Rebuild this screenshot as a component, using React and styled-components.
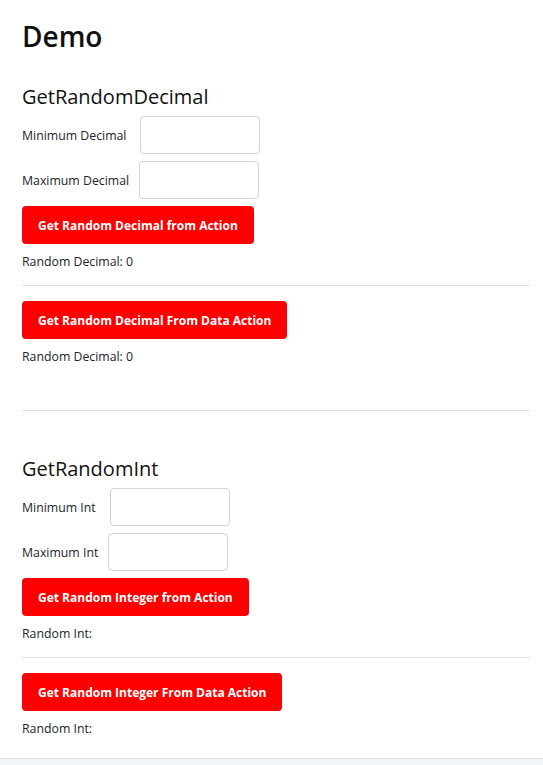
import React, { useState } from "react";
import styled, { createGlobalStyle } from "styled-components";

const GlobalStyle = createGlobalStyle`
  html, body {
    margin: 0;
    padding: 0;
    background: #f1f5f9;
  }
  body {
    font-family: "Open Sans", "Noto Sans", sans-serif;
    color: #212529;
  }
`;

const Card = styled.div`
  background: #ffffff;
  border-bottom: 1px solid #dde2e8;
  padding: 18px 13px 20px 22px;
`;

const Title = styled.h1`
  margin: 0 0 30px;
  font-size: 28px;
  font-weight: 600;
  line-height: 36px;
  color: #111;
`;

const SectionTitle = styled.h2`
  margin: 0 0 6px;
  font-size: 20px;
  font-weight: 500;
  line-height: 26px;
  color: #111;
`;

const Field = styled.div`
  display: flex;
  align-items: center;
  margin-bottom: 7px;
`;

const Label = styled.label`
  font-size: 12.3px;
  color: #212529;
  margin-right: ${(props) => props.gap}px;
`;

const Input = styled.input`
  width: 120px;
  height: 38px;
  box-sizing: border-box;
  border: 1px solid #ced4da;
  border-radius: 4px;
  padding: 6px 10px;
  font-family: inherit;
  font-size: 13px;
  outline: none;
`;

const Button = styled.button`
  display: block;
  height: 38px;
  box-sizing: border-box;
  border: none;
  border-radius: 4px;
  background: #ff0000;
  color: #ffffff;
  font-family: inherit;
  font-size: 12px;
  font-weight: 700;
  padding: 0 16px;
  cursor: pointer;
`;

const Result = styled.p`
  margin: 9px 0 0;
  font-size: 12.3px;
  line-height: 18px;
  color: #212529;
`;

const Divider = styled.hr`
  border: none;
  border-top: 1px solid #dee2e6;
  margin: ${(props) => props.space || "14px 0 15px"};
`;

function RandomSection({ title, kind, valueLabel, value, fromAction, fromData, gaps }) {
  return (
    <section>
      <SectionTitle>{title}</SectionTitle>
      <Field>
        <Label gap={gaps[0]}>Minimum {kind}</Label>
        <Input type="text" />
      </Field>
      <Field>
        <Label gap={gaps[1]}>Maximum {kind}</Label>
        <Input type="text" />
      </Field>
      <Button>{fromAction}</Button>
      <Result>
        {valueLabel}: {value}
      </Result>
      <Divider />
      <Button>{fromData}</Button>
      <Result>
        {valueLabel}: {value}
      </Result>
    </section>
  );
}

export default function App() {
  const [decimal] = useState(0);
  const [int] = useState("");

  return (
    <>
      <GlobalStyle />
      <Card>
        <Title>Demo</Title>
        <RandomSection
          title="GetRandomDecimal"
          kind="Decimal"
          valueLabel="Random Decimal"
          value={decimal}
          fromAction="Get Random Decimal from Action"
          fromData="Get Random Decimal From Data Action"
          gaps={[14, 10]}
        />
        <Divider space="44px 0 45px" />
        <RandomSection
          title="GetRandomInt"
          kind="Int"
          valueLabel="Random Int"
          value={int}
          fromAction="Get Random Integer from Action"
          fromData="Get Random Integer From Data Action"
          gaps={[14, 10]}
        />
      </Card>
    </>
  );
}
